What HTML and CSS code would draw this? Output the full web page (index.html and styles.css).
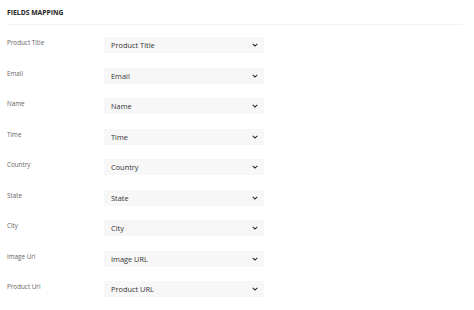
FILE: index.html
```html
<!DOCTYPE html>
<html>
<head>
<meta charset="utf-8">
<link rel="stylesheet" href="styles.css">
</head>
<body>
<div class="panel">
  <div class="header"><h2 class="title">FIELDS MAPPING</h2></div>
  <div class="rows">
    <div class="row"><span class="label">Product Title</span><div class="select"><span>Product Title</span><svg class="chev" viewBox="0 0 8 5"><path d="M1 1 L4 4 L7 1"/></svg></div></div>
    <div class="row"><span class="label">Email</span><div class="select"><span>Email</span><svg class="chev" viewBox="0 0 8 5"><path d="M1 1 L4 4 L7 1"/></svg></div></div>
    <div class="row"><span class="label">Name</span><div class="select"><span>Name</span><svg class="chev" viewBox="0 0 8 5"><path d="M1 1 L4 4 L7 1"/></svg></div></div>
    <div class="row"><span class="label">Time</span><div class="select"><span>Time</span><svg class="chev" viewBox="0 0 8 5"><path d="M1 1 L4 4 L7 1"/></svg></div></div>
    <div class="row"><span class="label">Country</span><div class="select"><span>Country</span><svg class="chev" viewBox="0 0 8 5"><path d="M1 1 L4 4 L7 1"/></svg></div></div>
    <div class="row"><span class="label">State</span><div class="select"><span>State</span><svg class="chev" viewBox="0 0 8 5"><path d="M1 1 L4 4 L7 1"/></svg></div></div>
    <div class="row"><span class="label">City</span><div class="select"><span>City</span><svg class="chev" viewBox="0 0 8 5"><path d="M1 1 L4 4 L7 1"/></svg></div></div>
    <div class="row"><span class="label">Image Url</span><div class="select"><span>Image URL</span><svg class="chev" viewBox="0 0 8 5"><path d="M1 1 L4 4 L7 1"/></svg></div></div>
    <div class="row"><span class="label">Product Url</span><div class="select"><span>Product URL</span><svg class="chev" viewBox="0 0 8 5"><path d="M1 1 L4 4 L7 1"/></svg></div></div>
  </div>
</div>
</body>
</html>
```
FILE: styles.css
```css
html, body {
  margin: 0;
  padding: 0;
  background: #ffffff;
}
body {
  font-family: "Open Sans", "Noto Sans", sans-serif;
  color: #444444;
}
.panel {
  width: 474px;
  height: 310px;
  overflow: hidden;
}
.header {
  margin: 0 11px 0 7px;
  height: 24px;
  border-bottom: 1px solid #f2f2f2;
  display: flex;
  align-items: center;
}
.title {
  margin: 0;
  font-size: 6.8px;
  font-weight: 700;
  color: #222222;
}
.rows {
  padding: 12px 0 0 7px;
  display: flex;
  flex-direction: column;
  gap: 14.5px;
}
.row {
  display: flex;
  align-items: flex-start;
  height: 16px;
}
.label {
  width: 97px;
  font-size: 6.3px;
  color: #666666;
  line-height: 10px;
  margin-top: 1px;
}
.select {
  width: 160px;
  height: 16px;
  background: #f7f7f7;
  display: flex;
  align-items: center;
  justify-content: space-between;
  padding: 0 6px 0 7px;
  box-sizing: border-box;
  font-size: 7.4px;
  color: #333333;
}
.chev {
  width: 6px;
  height: 4px;
  fill: none;
  stroke: #222222;
  stroke-width: 1.4;
}
```
